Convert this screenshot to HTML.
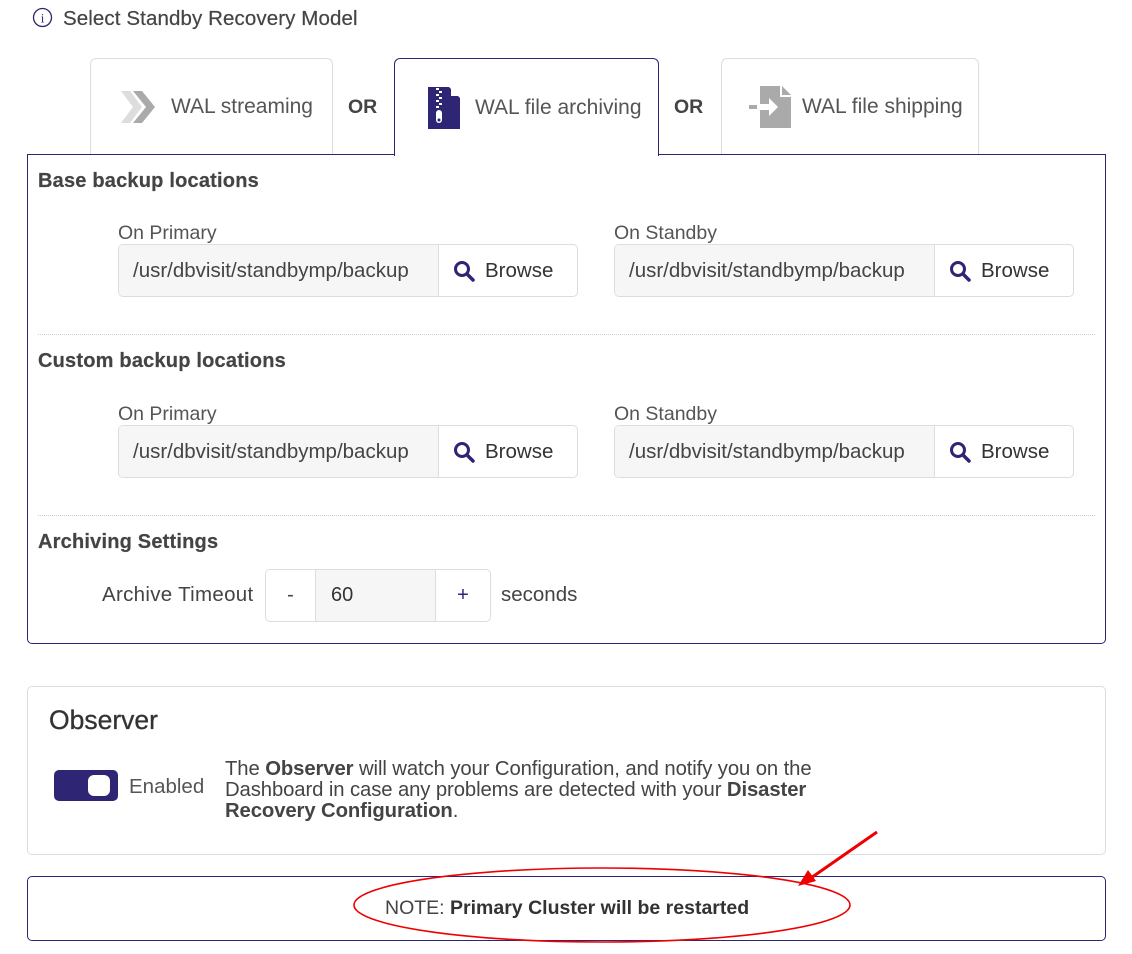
<!DOCTYPE html>
<html><head><style>
*{box-sizing:border-box;margin:0;padding:0}
body{width:1132px;height:954px;background:#fff;font-family:"Liberation Sans",sans-serif;color:#444;position:relative;overflow:hidden}
.a{position:absolute}
.tab{position:absolute;top:58px;height:96px;border:1px solid #ddd;border-bottom:none;border-radius:6px 6px 0 0;background:#fff;font-size:21px;color:#555;display:flex;align-items:center}
.h{position:absolute;font-size:20px;color:#444;letter-spacing:0.2px;font-weight:600;-webkit-text-stroke:0.2px #444}
.lbl{position:absolute;font-size:19.5px;color:#555}
.grp{position:absolute;height:53px;width:460px;border:1px solid #ddd;border-radius:5px;display:flex;font-size:20.5px;color:#444}
.grp .in{width:320px;background:#f6f6f6;border-right:1px solid #ddd;padding-left:14px;display:flex;align-items:center;border-radius:5px 0 0 5px}
.grp .bt{flex:1;display:flex;align-items:center;padding-left:14px;gap:10px;color:#333}
.sep{position:absolute;left:38px;width:1057px;border-top:1px dotted #ccc}
</style></head><body>
<svg class="a" style="left:32px;top:7px" width="21" height="21"><circle cx="10.5" cy="10.5" r="9" fill="none" stroke="#2e2574" stroke-width="1.3"/><text x="10.5" y="15.5" font-size="13" text-anchor="middle" fill="#2e2574" font-family="Liberation Serif">i</text></svg>
<div class="a" style="left:63px;top:7px;font-size:20.5px;color:#444;letter-spacing:0.1px;-webkit-text-stroke:0.2px #444">Select Standby Recovery Model</div>

<div class="a" style="left:27px;top:154px;width:1079px;height:490px;border:1px solid #2e2574;border-radius:0 0 5px 5px"></div>

<div class="tab" style="left:90px;width:243px">
<svg style="margin-left:28px" width="42" height="38" viewBox="0 0 42 38"><path d="M2 3h9l12 16-12 16H2l12-16z" fill="#ddd"/><path d="M14 3h9l13 16-13 16h-9l13-16z" fill="#aaa"/></svg>
<span style="margin-left:10px">WAL streaming</span></div>
<div class="a" style="left:348px;top:96px;font-size:19.5px;font-weight:bold;color:#444">OR</div>
<div class="tab" style="left:394px;width:265px;border-color:#2e2574;height:98px">
<svg style="margin-left:32px" width="34" height="44" viewBox="0 0 34 44"><path d="M1 1h21l11 11v31H1z" fill="#2e2574"/><path d="M24 1l9 9h-9z" fill="#fff"/><path d="M9 3h3M12 6h3M9 9h3M12 12h3M9 15h3M12 18h3M9 21h3" stroke="#fff" stroke-width="2"/><rect x="9" y="24" width="6" height="13" rx="3" fill="#fff"/><circle cx="12" cy="34" r="1.5" fill="#2e2574"/></svg>
<span style="margin-left:14px">WAL file archiving</span></div>
<div class="a" style="left:674px;top:96px;font-size:19.5px;font-weight:bold;color:#444">OR</div>
<div class="tab" style="left:721px;width:258px">
<svg style="margin-left:26px" width="44" height="44" viewBox="0 0 44 44"><path d="M12 1h20l11 11v31H12z" fill="#aaa"/><path d="M32 1l11 11H32z" fill="#fff"/><path d="M34 1l9 9h-9z" fill="#aaa"/><rect x="1" y="20" width="8" height="4" fill="#aaa"/><path d="M11 19h10v-6l9 9-9 9v-6H11z" fill="#fff"/></svg>
<span style="margin-left:10px">WAL file shipping</span></div>

<div class="h" style="left:38px;top:170px">Base backup locations</div>
<div class="lbl" style="left:118px;top:222px">On Primary</div>
<div class="lbl" style="left:614px;top:222px">On Standby</div>
<div class="grp" style="left:118px;top:244px"><div class="in">/usr/dbvisit/standbymp/backup</div><div class="bt"><svg width="22" height="22"><circle cx="9" cy="9" r="6.5" fill="none" stroke="#2e2574" stroke-width="3"/><path d="M14 14l6 6" stroke="#2e2574" stroke-width="3.5" stroke-linecap="round"/></svg>Browse</div></div>
<div class="grp" style="left:614px;top:244px"><div class="in">/usr/dbvisit/standbymp/backup</div><div class="bt"><svg width="22" height="22"><circle cx="9" cy="9" r="6.5" fill="none" stroke="#2e2574" stroke-width="3"/><path d="M14 14l6 6" stroke="#2e2574" stroke-width="3.5" stroke-linecap="round"/></svg>Browse</div></div>
<div class="sep" style="top:334px"></div>

<div class="h" style="left:38px;top:350px">Custom backup locations</div>
<div class="lbl" style="left:118px;top:403px">On Primary</div>
<div class="lbl" style="left:614px;top:403px">On Standby</div>
<div class="grp" style="left:118px;top:425px"><div class="in">/usr/dbvisit/standbymp/backup</div><div class="bt"><svg width="22" height="22"><circle cx="9" cy="9" r="6.5" fill="none" stroke="#2e2574" stroke-width="3"/><path d="M14 14l6 6" stroke="#2e2574" stroke-width="3.5" stroke-linecap="round"/></svg>Browse</div></div>
<div class="grp" style="left:614px;top:425px"><div class="in">/usr/dbvisit/standbymp/backup</div><div class="bt"><svg width="22" height="22"><circle cx="9" cy="9" r="6.5" fill="none" stroke="#2e2574" stroke-width="3"/><path d="M14 14l6 6" stroke="#2e2574" stroke-width="3.5" stroke-linecap="round"/></svg>Browse</div></div>
<div class="sep" style="top:515px"></div>

<div class="h" style="left:38px;top:531px">Archiving Settings</div>
<div class="lbl" style="left:102px;top:583px;color:#444;font-size:20.5px;letter-spacing:0.3px">Archive Timeout</div>
<div class="a" style="left:265px;top:569px;width:226px;height:53px;border:1px solid #ddd;border-radius:5px;display:flex;font-size:20px">
<div style="width:50px;display:flex;align-items:center;justify-content:center;border-right:1px solid #ddd">-</div>
<div style="width:120px;background:#f6f6f6;border-right:1px solid #ddd;display:flex;align-items:center;padding-left:15px;color:#333">60</div>
<div style="flex:1;display:flex;align-items:center;justify-content:center;color:#2e2574">+</div></div>
<div class="lbl" style="left:501px;top:583px;color:#444;font-size:20.5px">seconds</div>

<div class="a" style="left:27px;top:686px;width:1079px;height:169px;border:1px solid #ddd;border-radius:5px"></div>
<div class="a" style="left:49px;top:705px;font-size:26.5px;color:#333;-webkit-text-stroke:0.3px #333">Observer</div>
<div class="a" style="left:54px;top:770px;width:64px;height:31px;background:#2e2574;border-radius:5px"><div style="position:absolute;left:34px;top:5px;width:22px;height:21px;background:#fff;border-radius:6px"></div></div>
<div class="lbl" style="left:129px;top:775px;font-size:20.5px">Enabled</div>
<div class="a" style="left:225px;top:759px;font-size:20.3px;line-height:21px;color:#444;width:700px;letter-spacing:-0.1px">The <b>Observer</b> will watch your Configuration, and notify you on the<br>Dashboard in case any problems are detected with your <b>Disaster<br>Recovery Configuration</b>.</div>

<div class="a" style="left:27px;top:876px;width:1079px;height:65px;border:1px solid #2e2574;border-radius:5px"></div>
<div class="a" style="left:385px;top:897px;font-size:19.5px;color:#444">NOTE: <b style="color:#333">Primary Cluster will be restarted</b></div>
<svg class="a" style="left:0;top:0" width="1132" height="954"><ellipse cx="602" cy="905" rx="248" ry="37" fill="none" stroke="#e00" stroke-width="1.6"/><path d="M877 832L808 880" stroke="#e00" stroke-width="3"/><path d="M798 886l10-16 8 11z" fill="#e00"/></svg>
</body></html>
